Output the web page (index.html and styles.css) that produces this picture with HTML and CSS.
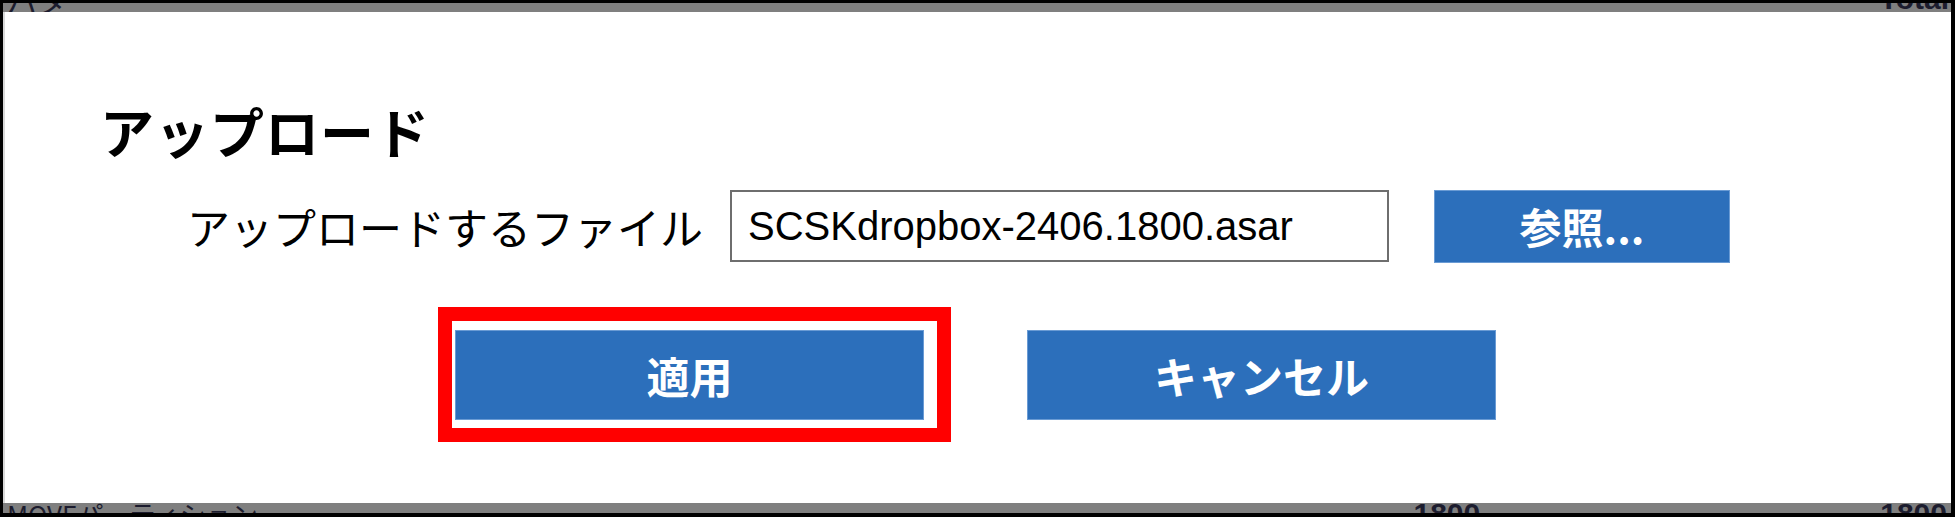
FILE: index.html
```html
<!DOCTYPE html>
<html lang="ja">
<head>
<meta charset="utf-8">
<title>アップロード</title>
<link rel="stylesheet" href="styles.css">
</head>
<body>
<div class="frame">
  <div class="band band-top">
    <span class="peek peek-tl">パター</span>
    <span class="spacer"></span>
    <span class="peek peek-tr">Total</span>
  </div>
  <div class="dialog">
    <h1 class="title">アップロード</h1>
    <div class="file-row">
      <span class="label">アップロードするファイル</span>
      <div class="input">SCSKdropbox-2406.1800.asar</div>
      <button class="btn btn-browse">参照...</button>
    </div>
    <div class="actions">
      <div class="apply-wrap">
        <button class="btn btn-action">適用</button>
        <span class="highlight"></span>
      </div>
      <button class="btn btn-action">キャンセル</button>
    </div>
  </div>
  <div class="band band-bottom">
    <span class="peek peek-bl">MOVEパーティション</span>
    <span class="spacer"></span>
    <span class="peek peek-b1">1800</span>
    <span class="peek peek-b2">1800</span>
  </div>
</div>
</body>
</html>
```
FILE: styles.css
```css
html, body {
  margin: 0;
  padding: 0;
  background: #ffffff;
}

.frame {
  box-sizing: border-box;
  width: 1955px;
  height: 517px;
  border-style: solid;
  border-color: #000000;
  border-width: 3px 4px 4px 3px;
  display: flex;
  flex-direction: column;
  font-family: "Noto Sans CJK JP", "Noto Sans", sans-serif;
  color: #000000;
}

.band {
  background: #7f7f7f;
  display: flex;
  overflow: hidden;
  flex: none;
}

.band-top {
  height: 9px;
  align-items: flex-end;
}

.band-bottom {
  height: 10px;
  align-items: flex-start;
}

.spacer {
  flex: 1;
}

.peek {
  font-family: "Liberation Sans", "Noto Sans CJK JP", sans-serif;
  font-size: 30px;
  line-height: 30px;
  color: #1c1c2e;
  white-space: nowrap;
  flex: none;
}

.band-top .peek {
  margin-bottom: -2px;
}

.band-bottom .peek {
  margin-top: -4px;
}

.peek-tl {
  margin-left: 4px;
  font-family: "Noto Sans CJK JP", sans-serif;
}

.peek-tr {
  margin-right: 2px;
  font-weight: bold;
}

.peek-bl {
  margin-left: 4px;
  font-size: 26px;
  font-family: "Noto Sans CJK JP", sans-serif;
}

.peek-b1 {
  margin-right: 400px;
  font-weight: bold;
}

.peek-b2 {
  margin-right: 4px;
  font-weight: bold;
}

.dialog {
  flex: 1;
  background: #ffffff;
  border-left: 2px solid #d8d8d8;
  padding: 92px 0 0 95px;
  display: flex;
  flex-direction: column;
}

.title {
  margin: 0;
  font-size: 54px;
  line-height: 54px;
  font-weight: bold;
  letter-spacing: 1px;
}

.file-row {
  display: flex;
  align-items: center;
  margin-top: 32px;
  padding-left: 87px;
  height: 72px;
}

.label {
  font-size: 43px;
  line-height: 1;
  margin-right: 27px;
  white-space: nowrap;
}

.input {
  box-sizing: border-box;
  width: 659px;
  height: 72px;
  border: 2px solid #6e6e6e;
  font-family: "Liberation Sans", Arial, sans-serif;
  font-size: 40px;
  line-height: 68px;
  padding-left: 16px;
  color: #000000;
  white-space: nowrap;
}

.btn {
  box-sizing: border-box;
  background: #2c6fbb;
  border: 1px solid #6a9bd4;
  color: #ffffff;
  font-family: "Noto Sans CJK JP", sans-serif;
  font-weight: bold;
  padding: 0;
  margin: 0;
  cursor: pointer;
}

.btn-browse {
  margin-left: 45px;
  width: 296px;
  height: 73px;
  font-size: 42px;
  line-height: 1;
}

.actions {
  display: flex;
  margin-top: 68px;
  padding-left: 355px;
  gap: 103px;
}

.apply-wrap {
  position: relative;
  display: flex;
}

.btn-action {
  width: 469px;
  height: 90px;
  font-size: 43px;
  line-height: 1;
}

.highlight {
  position: absolute;
  left: -17px;
  top: -23px;
  right: -27px;
  bottom: -22px;
  border: 14px solid #ff0000;
  pointer-events: none;
}
```
